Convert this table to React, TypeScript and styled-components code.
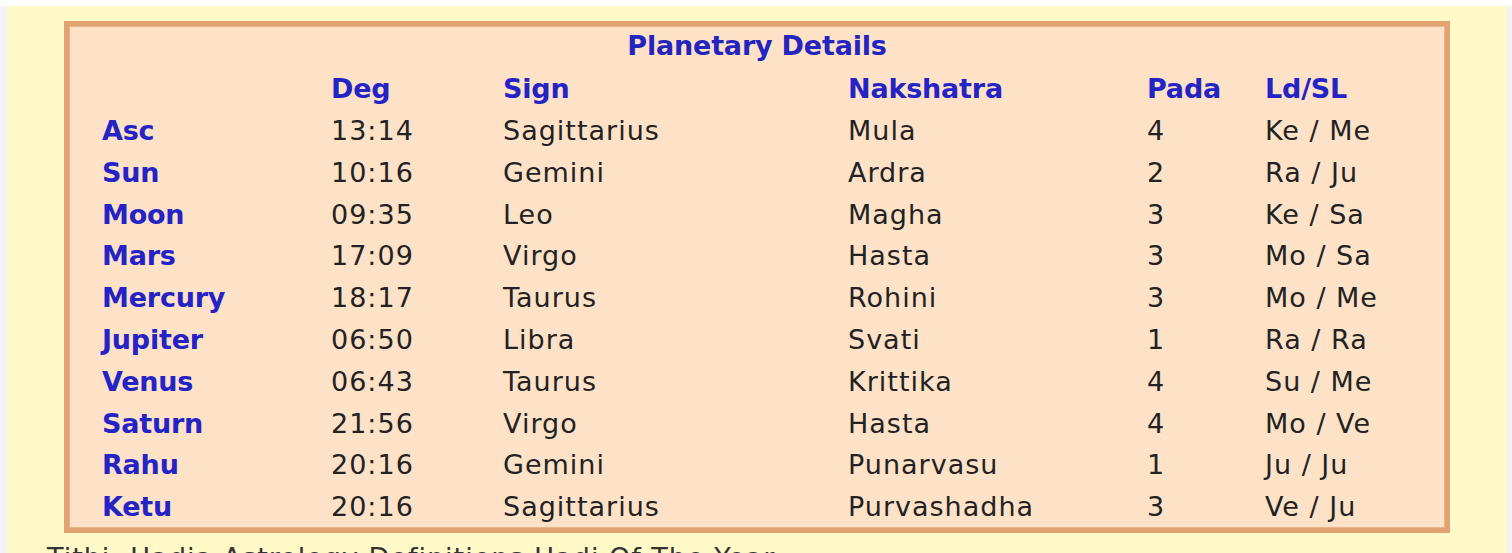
import React from "react";
import styled, { createGlobalStyle } from "styled-components";

const GlobalStyle = createGlobalStyle`
  html, body {
    margin: 0;
    padding: 0;
    background: #ffffff;
  }
  body {
    font-family: "DejaVu Sans", Verdana, sans-serif;
  }
`;

const Page = styled.div`
  height: 553px;
  overflow: hidden;
  border-top: 6px solid #ffffff;
  background: #f3f3f7;
  padding: 0 5px 0 7px;
  box-sizing: border-box;
`;

const Panel = styled.div`
  height: 100%;
  background: #fff9c8;
  padding: 15px 57px 0 57px;
  box-sizing: border-box;
`;

const Box = styled.div`
  border: 5px solid #e1a372;
  background: #fde2c8;
  box-shadow: inset 0 0 0 1px #e9b48a;
`;

const Grid = styled.div`
  display: grid;
  grid-template-columns: 229px 172px 345px 299px 118px 1fr;
  grid-auto-rows: 41.8px;
  padding-left: 33px;
  font-size: 27px;
`;

const Title = styled.div`
  grid-column: 1 / -1;
  height: 38px;
  margin-left: -33px;
  display: flex;
  align-items: center;
  justify-content: center;
  font-weight: bold;
  color: #2424c0;
  letter-spacing: -0.2px;
`;

const Cell = styled.div<{ $head?: boolean }>`
  display: flex;
  align-items: center;
  white-space: nowrap;
  font-weight: ${(p) => (p.$head ? "bold" : "normal")};
  color: ${(p) => (p.$head ? "#2323c6" : "#222222")};
  letter-spacing: ${(p) => (p.$head ? "-0.2px" : "1px")};
`;

const Note = styled.div`
  margin-top: 4px;
  margin-left: -17px;
  font-size: 27px;
  line-height: 42px;
  letter-spacing: 1px;
  color: #333333;
  white-space: nowrap;
`;

const headers = ["", "Deg", "Sign", "Nakshatra", "Pada", "Ld/SL"];

const rows: string[][] = [
  ["Asc", "13:14", "Sagittarius", "Mula", "4", "Ke / Me"],
  ["Sun", "10:16", "Gemini", "Ardra", "2", "Ra / Ju"],
  ["Moon", "09:35", "Leo", "Magha", "3", "Ke / Sa"],
  ["Mars", "17:09", "Virgo", "Hasta", "3", "Mo / Sa"],
  ["Mercury", "18:17", "Taurus", "Rohini", "3", "Mo / Me"],
  ["Jupiter", "06:50", "Libra", "Svati", "1", "Ra / Ra"],
  ["Venus", "06:43", "Taurus", "Krittika", "4", "Su / Me"],
  ["Saturn", "21:56", "Virgo", "Hasta", "4", "Mo / Ve"],
  ["Rahu", "20:16", "Gemini", "Punarvasu", "1", "Ju / Ju"],
  ["Ketu", "20:16", "Sagittarius", "Purvashadha", "3", "Ve / Ju"],
];

export default function App() {
  return (
    <>
      <GlobalStyle />
      <Page>
        <Panel>
          <Box>
            <Grid>
              <Title>Planetary Details</Title>
              {headers.map((h, i) => (
                <Cell key={"h" + i} $head>
                  {h}
                </Cell>
              ))}
              {rows.map((r, ri) =>
                r.map((v, ci) => (
                  <Cell key={ri + "-" + ci} $head={ci === 0}>
                    {v}
                  </Cell>
                ))
              )}
            </Grid>
          </Box>
          <Note>Tithi: Hadia Astrology Definitions Hadi Of The Year</Note>
        </Panel>
      </Page>
    </>
  );
}
